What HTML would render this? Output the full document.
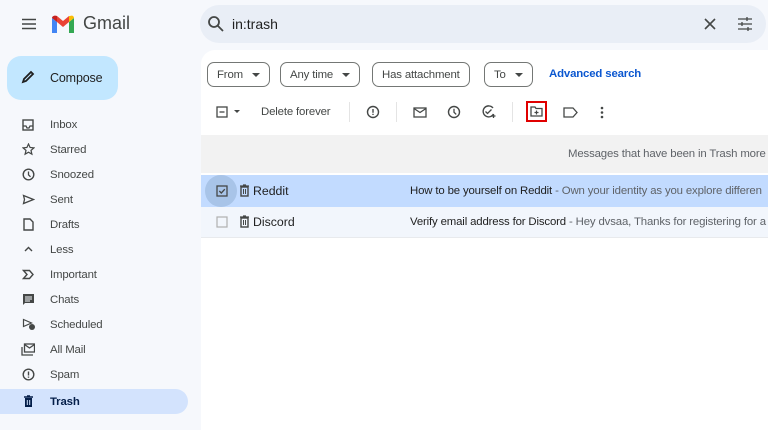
<!DOCTYPE html><html><head><style>
*{margin:0;padding:0;box-sizing:border-box}
body{width:768px;height:418px;overflow:hidden;background:#f6f8fc;font-family:"Liberation Sans",Arial,sans-serif;color:#444746;position:relative;font-size:12px}
.a{position:absolute}
svg{position:absolute}
.nav{position:absolute;left:0;height:25px;width:188px;display:flex;align-items:center;font-size:12px;color:#444746}
.nav span{position:absolute;left:50px;top:7px}
.chip{position:absolute;top:62px;height:25px;border:1px solid #747775;border-radius:7px;font-size:12px;color:#444746;display:flex;align-items:center;padding:0 9px}
.tri{display:inline-block;width:0;height:0;border-left:4px solid transparent;border-right:4px solid transparent;border-top:4px solid #444746;margin-left:9px}
.sm{font-size:11.4px;letter-spacing:-0.15px}
</style></head><body>
<svg style="left:21px;top:18px" width="16" height="12"><path d="M1 1.5h14M1 6h14M1 10.5h14" stroke="#444746" stroke-width="1.6"/></svg>
<svg style="left:51px;top:15px" width="24" height="18" viewBox="0 0 24 18"><path d="M1 3v15h5V7z" fill="#4285f4"/><path d="M18 7v11h5V3z" fill="#34a853"/><path d="M18 1v6l5-4C23 1 21 0 19 1z" fill="#fbbc04"/><path d="M6 7l6 5 6-5V1l-6 5-6-5z" fill="#ea4335"/><path d="M1 3l5 4V1C4 0 1 1 1 3z" fill="#c5221f"/></svg>
<div class="a" style="left:83px;top:13px;font-size:18px;color:#444746">Gmail</div>
<div class="a" style="left:200px;top:5px;width:566px;height:38px;background:#e9eef6;border-radius:19px"></div>
<svg style="left:207px;top:15px" width="18" height="18"><circle cx="7" cy="7" r="5" fill="none" stroke="#444746" stroke-width="1.8"/><path d="M11 11l5 5" stroke="#444746" stroke-width="1.8"/></svg>
<div class="a" style="left:232px;top:16px;font-size:14px;color:#1f1f1f">in:trash</div>
<svg style="left:703px;top:17px" width="14" height="14"><path d="M2 2l10 10M12 2L2 12" stroke="#444746" stroke-width="1.6"/></svg>
<svg style="left:737px;top:16px" width="16" height="16"><path d="M1 3h14M1 8h14M1 13h14" stroke="#444746" stroke-width="1.3"/><path d="M10 1v4M5 6v4M11 11v4" stroke="#444746" stroke-width="1.3"/></svg>
<div class="a" style="left:7px;top:56px;width:111px;height:44px;background:#c2e7ff;border-radius:14px"></div>
<svg style="left:21px;top:70px" width="14" height="14"><path d="M2 12l1-3 7-7 2 2-7 7z" fill="none" stroke="#1f1f1f" stroke-width="1.8"/></svg>
<div class="a sm" style="left:50px;top:71px;font-size:12.5px;color:#1f1f1f">Compose</div>
<div class="nav sm" style="top:112px"><svg style="left:22px;top:7px" width="12" height="12"><rect x="1" y="1" width="10" height="10" fill="none" stroke="#444746" stroke-width="1.4"/><path d="M1 7h3l1 2h2l1-2h3" fill="none" stroke="#444746" stroke-width="1.3"/></svg><span>Inbox</span></div>
<div class="nav sm" style="top:137px"><svg style="left:22px;top:6px" width="13" height="13"><path d="M6.5 1l1.6 3.5 3.8.4-2.9 2.5.9 3.8-3.4-2-3.4 2 .9-3.8L1.1 4.9l3.8-.4z" fill="none" stroke="#444746" stroke-width="1.2"/></svg><span>Starred</span></div>
<div class="nav sm" style="top:162px"><svg style="left:22px;top:6px" width="13" height="13"><circle cx="6.5" cy="6.5" r="5.3" fill="none" stroke="#444746" stroke-width="1.4"/><path d="M6.5 3.5v3.3l2 2" fill="none" stroke="#444746" stroke-width="1.3"/></svg><span>Snoozed</span></div>
<div class="nav sm" style="top:187px"><svg style="left:22px;top:7px" width="13" height="11"><path d="M1.5 1.5l10 4-10 4 1-4z" fill="none" stroke="#444746" stroke-width="1.3"/></svg><span>Sent</span></div>
<div class="nav sm" style="top:212px"><svg style="left:23px;top:6px" width="11" height="13"><path d="M1 1h6l3 3v8H1z" fill="none" stroke="#444746" stroke-width="1.4"/></svg><span>Drafts</span></div>
<div class="nav sm" style="top:237px"><svg style="left:24px;top:9px" width="9" height="6"><path d="M1 5l3.5-3.5L8 5" fill="none" stroke="#444746" stroke-width="1.4"/></svg><span>Less</span></div>
<div class="nav sm" style="top:262px"><svg style="left:22px;top:7px" width="13" height="11"><path d="M1.5 1.5h6l3.5 4-3.5 4h-6l3.5-4z" fill="none" stroke="#444746" stroke-width="1.4"/></svg><span>Important</span></div>
<div class="nav sm" style="top:287px"><svg style="left:22px;top:6px" width="13" height="13"><path d="M1 1h11v9H3l-2 2z" fill="#444746"/><path d="M3 4h7M3 6h7M3 8h5" stroke="#f6f8fc" stroke-width="1"/></svg><span>Chats</span></div>
<div class="nav sm" style="top:312px"><svg style="left:22px;top:6px" width="14" height="13"><path d="M1.5 1.5l8 3.5-8 3.5z" fill="none" stroke="#444746" stroke-width="1.2"/><circle cx="10" cy="9" r="3" fill="#444746"/></svg><span>Scheduled</span></div>
<div class="nav sm" style="top:337px"><svg style="left:21px;top:6px" width="14" height="13"><rect x="3.5" y="1" width="10" height="8" fill="none" stroke="#444746" stroke-width="1.3"/><path d="M3.5 1.5l5 3.5 5-3.5M1 4v8h11" fill="none" stroke="#444746" stroke-width="1.3"/></svg><span>All Mail</span></div>
<div class="nav sm" style="top:362px"><svg style="left:22px;top:6px" width="13" height="13"><circle cx="6.5" cy="6.5" r="5.3" fill="none" stroke="#444746" stroke-width="1.4"/><path d="M6.5 3.5v4M6.5 8.5v1.2" stroke="#444746" stroke-width="1.4"/></svg><span>Spam</span></div>
<div class="a" style="left:0;top:389px;width:188px;height:25px;background:#d3e3fd;border-radius:0 13px 13px 0"></div>
<div class="nav sm" style="top:389px;color:#041e49;font-weight:bold"><svg style="left:23px;top:6px" width="11" height="13"><path d="M1 2h9M4 1h3" stroke="#041e49" stroke-width="1.4"/><path d="M2 3h7v9H2z" fill="#041e49"/><path d="M4.3 5v5M6.7 5v5" stroke="#d3e3fd" stroke-width="1"/></svg><span>Trash</span></div>
<div class="a" style="left:201px;top:50px;width:580px;height:380px;background:#fff;border-radius:14px 0 0 0"></div>
<div class="chip sm" style="left:207px">From<i class="tri"></i></div>
<div class="chip sm" style="left:280px">Any time<i class="tri"></i></div>
<div class="chip sm" style="left:372px">Has attachment</div>
<div class="chip sm" style="left:484px">To<i class="tri"></i></div>
<div class="a sm" style="left:549px;top:68px;color:#0b57d0;font-weight:bold">Advanced search</div>
<svg style="left:216px;top:106px" width="12" height="12"><rect x="1" y="1" width="10" height="10" fill="none" stroke="#444746" stroke-width="1.3"/><path d="M3.5 6h5" stroke="#444746" stroke-width="1.3"/></svg>
<div class="a" style="left:234px;top:110px;border-left:3.5px solid transparent;border-right:3.5px solid transparent;border-top:3.5px solid #444746"></div>
<div class="a sm" style="left:261px;top:106px;color:#444746">Delete forever</div>
<div class="a" style="left:349px;top:102px;width:1px;height:20px;background:#e4e4e4"></div>
<svg style="left:366px;top:105px" width="14" height="14"><circle cx="7" cy="7" r="5.5" fill="none" stroke="#444746" stroke-width="1.4"/><path d="M7 4v3.8M7 8.8v1.2" stroke="#444746" stroke-width="1.4"/></svg>
<div class="a" style="left:396px;top:102px;width:1px;height:20px;background:#e4e4e4"></div>
<svg style="left:413px;top:107px" width="14" height="11"><rect x="1" y="1" width="12" height="9" fill="none" stroke="#444746" stroke-width="1.3"/><path d="M1 1.5l6 4 6-4" fill="none" stroke="#444746" stroke-width="1.3"/></svg>
<svg style="left:447px;top:105px" width="14" height="14"><circle cx="7" cy="7" r="5.5" fill="none" stroke="#444746" stroke-width="1.4"/><path d="M7 3.8v3.4l2.2 2.2" fill="none" stroke="#444746" stroke-width="1.3"/></svg>
<svg style="left:481px;top:104px" width="16" height="16"><path d="M12 4A5.5 5.5 0 1 0 12.5 10" fill="none" stroke="#444746" stroke-width="1.4"/><path d="M4.5 7.5l2 2 4-4M12.5 10v4M10.5 12h4" fill="none" stroke="#444746" stroke-width="1.3"/></svg>
<div class="a" style="left:512px;top:102px;width:1px;height:20px;background:#e4e4e4"></div>
<div class="a" style="left:526px;top:101px;width:21px;height:21px;border:2px solid #e00000"></div>
<svg style="left:530px;top:106px" width="13" height="11"><path d="M1 1h4l1 1.5h6V10H1z" fill="none" stroke="#444746" stroke-width="1.3"/><path d="M6.5 4.5v4M4.5 6.5h4" stroke="#444746" stroke-width="1.2"/></svg>
<svg style="left:563px;top:107px" width="15" height="11"><path d="M1 1h9l4 4.5-4 4.5H1z" fill="none" stroke="#444746" stroke-width="1.3"/></svg>
<svg style="left:600px;top:106px" width="4" height="13"><circle cx="2" cy="2" r="1.3" fill="#444746"/><circle cx="2" cy="6.5" r="1.3" fill="#444746"/><circle cx="2" cy="11" r="1.3" fill="#444746"/></svg>
<div class="a" style="left:201px;top:135px;width:567px;height:38px;background:#f2f2f2"></div>
<div class="a sm" style="left:568px;top:148px;color:#5f6368;white-space:nowrap">Messages that have been in Trash more</div>
<div class="a" style="left:201px;top:175px;width:567px;height:32px;background:#c2dbff"></div>
<div class="a" style="left:205px;top:175px;width:32px;height:32px;border-radius:50%;background:#a8c4e8"></div>
<svg style="left:216px;top:185px" width="12" height="12"><rect x="1" y="1" width="10" height="10" fill="none" stroke="#444746" stroke-width="1.3"/><path d="M3.3 6l2 2 3.5-3.8" fill="none" stroke="#444746" stroke-width="1.3"/></svg>
<svg style="left:239px;top:184px" width="11" height="13"><path d="M1 2h9M4 1h3" stroke="#444746" stroke-width="1.3"/><rect x="2" y="3" width="7" height="9" fill="none" stroke="#444746" stroke-width="1.4"/><path d="M4.5 5v5M6.5 5v5" stroke="#444746" stroke-width="1"/></svg>
<div class="a" style="left:253px;top:184px;font-size:12.3px;color:#1f1f1f">Reddit</div>
<div class="a sm" style="left:410px;top:185px;color:#1f1f1f;white-space:nowrap">How to be yourself on Reddit <span style="color:#5f6368">- Own your identity as you explore differen</span></div>
<div class="a" style="left:201px;top:207px;width:567px;height:31px;background:#f2f6fc;border-bottom:1px solid #e8eaed"></div>
<svg style="left:216px;top:216px" width="12" height="12"><rect x="1" y="1" width="10" height="10" fill="none" stroke="#b0b0b0" stroke-width="1.2"/></svg>
<svg style="left:239px;top:215px" width="11" height="13"><path d="M1 2h9M4 1h3" stroke="#444746" stroke-width="1.3"/><rect x="2" y="3" width="7" height="9" fill="none" stroke="#444746" stroke-width="1.4"/><path d="M4.5 5v5M6.5 5v5" stroke="#444746" stroke-width="1"/></svg>
<div class="a" style="left:253px;top:215px;font-size:12.3px;color:#1f1f1f">Discord</div>
<div class="a sm" style="left:410px;top:216px;color:#1f1f1f;white-space:nowrap">Verify email address for Discord <span style="color:#5f6368">- Hey dvsaa, Thanks for registering for a</span></div>
</body></html>
